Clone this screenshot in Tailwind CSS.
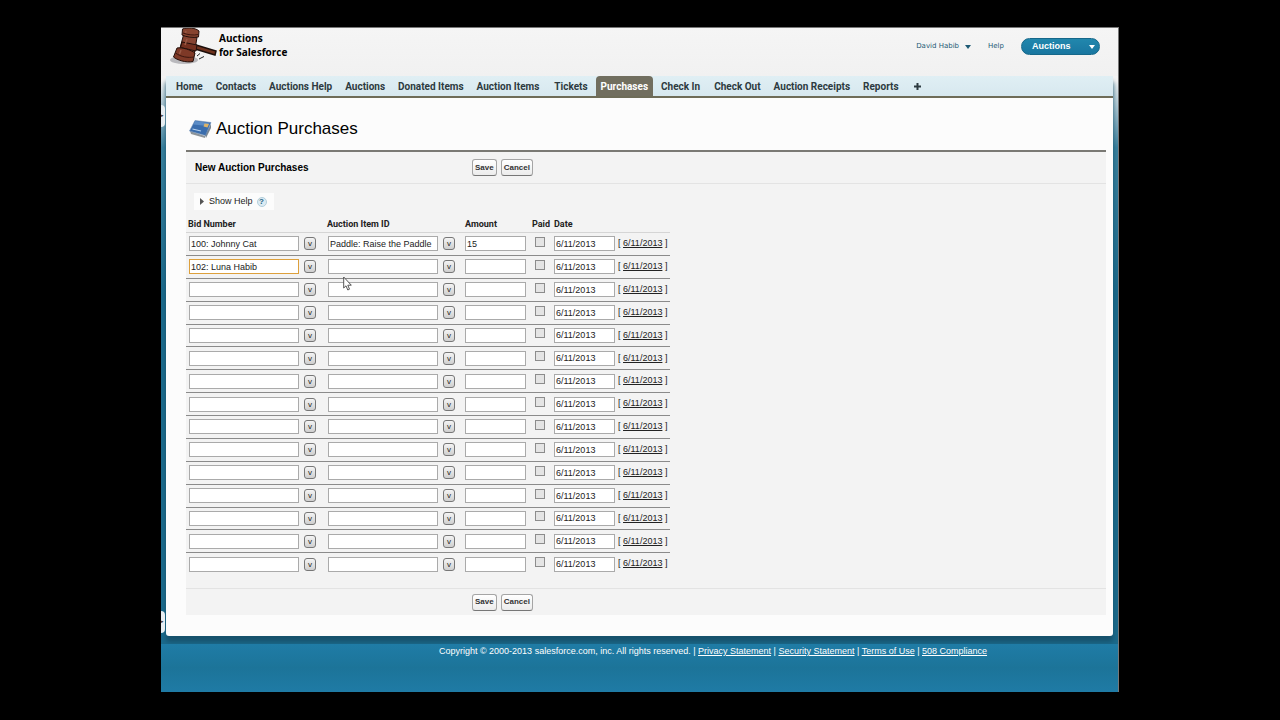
<!DOCTYPE html>
<html lang="en">
<head>
<meta charset="utf-8">
<meta name="viewport" content="width=device-width, initial-scale=1">
<title>Auction Purchases</title>
<script src="https://cdn.jsdelivr.net/npm/@tailwindcss/browser@4"></script>
</head>
<body class="min-h-screen bg-black px-[161px] pt-[27px] pb-[27px] font-['Liberation_Sans',Arial,sans-serif] text-[9px] text-[#222]">
<div class="relative border-r border-t border-[#777] bg-linear-to-b from-[#f3f3f3] from-8% via-[#3b829f] via-18% to-[#1b6a8c] to-40%">
  <span class="absolute left-0 top-[77px] flex h-[22px] w-1 items-center overflow-hidden rounded-r-sm bg-[#e8eef2] text-[5px] text-[#333]">▸</span>
  <span class="absolute left-0 top-[583px] flex h-[22px] w-1 items-center overflow-hidden rounded-r-sm bg-[#e8eef2] text-[5px] text-[#333]">▸</span>

  <header class="relative z-10 flex h-12 items-start justify-between bg-linear-to-b from-[#f5f5f5] to-[#f1f1f1] pr-[18px] pl-2">
    <div class="flex items-start">
      <svg class="h-[38px] w-[50px]" viewBox="0 0 50 38" aria-hidden="true">
        <ellipse cx="15" cy="32" rx="14" ry="4" fill="#b9b9bd"/>
        <path d="M27 17L47 23L46 27L26 21Z" fill="#71331f" stroke="#1d0f0b" stroke-width="1.500"/>
        <path d="M14.500 7L28 9.500L25 27L10 24Z" fill="#874432" stroke="#24100b"/>
        <path d="M13 14L28 17L27 23L11.500 19.500Z" fill="#74301f" stroke="#24100b"/>
        <path d="M13.500 1C19-1 27 0 30 3L29.500 9C24 10 17 9 13 7Z" fill="#87432f" stroke="#24100b"/>
        <path d="M14 5C19 7 25 7.500 29 6.500" stroke="#3b160e" fill="none"/>
        <path d="M8 20C13 19 22 22 26 25L24 33.500C17 35 8 32 4.500 29Z" fill="#7e3927" stroke="#24100b"/>
        <path d="M6.500 25C12 29 19 30 25 29" stroke="#3b160e" fill="none"/>
        <path d="M18 11L16 17M17 3L16.500 5M12 22L10.500 26" stroke="#9a5a45" stroke-width="1.500"/>
        <path d="M28 28L31 25.500M30 31L35 28.500" stroke="#222" fill="none"/>
      </svg>
      <p class="mt-[3px] font-['Open_Sans',sans-serif] text-[10px] leading-[14px] font-bold text-black">Auctions<br>for Salesforce</p>
    </div>
    <div class="mt-2.5 flex items-center text-[#1d5a74]">
      <button type="button" class="mr-[17px] flex items-center gap-1.5 font-['DejaVu_Sans',sans-serif] text-[7px]">David Habib
        <svg class="h-1 w-1.5" viewBox="0 0 6 4" fill="currentColor"><path d="M0 0H6L3 4Z"/></svg></button>
      <a href="#" class="mr-[17px] font-['DejaVu_Sans',sans-serif] text-[7px]">Help</a>
      <button type="button" class="flex h-[17px] w-[79px] items-center justify-between rounded-full border border-[#16688a] bg-linear-to-b from-[#2187ad] to-[#1976a0] pr-1 pl-2.5 text-[9px] font-bold text-white">Auctions
        <svg class="h-1 w-1.5" viewBox="0 0 6 4" fill="currentColor"><path d="M0 0H6L3 4Z"/></svg></button>
    </div>
  </header>

  <div class="mr-[5px] ml-[5px] rounded-b-[3px] bg-[#fcfcfc] shadow-[0_6px_5px_0_#17526c]">
    <nav class="flex h-[22px] items-stretch border-b-2 border-[#6e6c58] bg-linear-to-b from-[#e0eff4] to-[#d7e8ef] pl-1 font-['Roboto',sans-serif] text-[10px] font-bold text-[#2d3a40]">
      <a href="#" class="flex items-center pr-[7px] pl-1.5">Home</a>
      <a href="#" class="flex items-center pr-[7px] pl-1.5">Contacts</a>
      <a href="#" class="flex items-center pr-[7px] pl-1.5">Auctions Help</a>
      <a href="#" class="flex items-center pr-[7px] pl-1.5">Auctions</a>
      <a href="#" class="flex items-center pr-[7px] pl-1.5">Donated Items</a>
      <a href="#" class="flex items-center pr-[7px] pl-1.5">Auction Items</a>
      <a href="#" class="flex items-center px-2">Tickets</a>
      <a href="#" class="flex items-center rounded-t-[4px] bg-[#716e5f] px-[5px] text-white">Purchases</a>
      <a href="#" class="flex items-center px-2">Check In</a>
      <a href="#" class="flex items-center pr-[7px] pl-1.5">Check Out</a>
      <a href="#" class="flex items-center pr-[7px] pl-1.5">Auction Receipts</a>
      <a href="#" class="flex items-center pr-[7px] pl-1.5">Reports</a>
      <a href="#" class="flex items-center px-2" aria-label="All tabs"><svg class="size-[7px]" viewBox="0 0 7 7" fill="currentColor"><path d="M2.500 0H4.500V2.500H7V4.500H4.500V7H2.500V4.500H0V2.500H2.500Z"/></svg></a>
    </nav>
    <main class="pr-[7px] pb-[21px] pl-5">
      <h1 class="flex h-[52px] items-center gap-1 pt-2.5 pl-[3px] text-[17px] text-black">
        <svg class="h-[18px] w-[23px]" viewBox="0 0 23 18" aria-hidden="true">
          <path d="M1 11L16 16V18L2 14Z" fill="#8d9499"/><path d="M16 15L22 4V8L17 18Z" fill="#7a8590"/>
          <path d="M6 0.500L22 2.500L16.500 15.500L0.500 11Z" fill="#3a6dad" stroke="#6f8fb5" stroke-width=".6"/>
          <path d="M6 1L20 3L18.500 6L4.500 4.500Z" fill="#5b8cc6"/>
          <path d="M15.500 3.500L20 4L18.500 7.500L14.500 6.500Z" fill="#dcb368"/>
          <path d="M3.500 9L12 11" stroke="#b9d3ee" stroke-width="1.200"/>
        </svg>Auction Purchases</h1>
      <form class="border-t-2 border-[#7a7974] bg-[#f3f3f3]">
        <div class="flex h-8 items-center gap-1 border-b border-[#e3e3e3] pl-[9px]">
          <h2 class="w-[273px] text-[10px] font-bold text-black">New Auction Purchases</h2>
          <button type="button" class="h-[17px] rounded-[3px] border border-[#a5a5a5] border-b-[#777] bg-linear-to-b from-white to-[#ececec] px-[2px] text-[8px] font-bold text-[#333]">Save</button>
          <button type="button" class="h-[17px] rounded-[3px] border border-[#a5a5a5] border-b-[#777] bg-linear-to-b from-white to-[#ececec] px-[2px] text-[8px] font-bold text-[#333]">Cancel</button>
        </div>
        <div class="pt-[9px]">
          <button type="button" class="ml-2 flex h-[17px] w-20 items-center bg-[#fcfcfc] pl-1.5 text-[#222]">
            <svg class="mr-[5px] h-[7px] w-1" viewBox="0 0 4 7" fill="#555"><path d="M0 0L4 3.500L0 7Z"/></svg>Show Help
            <span class="ml-1 flex size-[10px] items-center justify-center rounded-full border border-[#b4cfdc] bg-[#dcebf3] text-[8px] font-bold text-[#25637f]">?</span></button>
        </div>
        <table class="mt-[7px] h-[358px] w-[484px] table-fixed border-collapse">
          <colgroup><col class="w-[118px]"><col class="w-5"><col class="w-[119px]"><col class="w-5"><col class="w-[67px]"><col class="w-[22px]"><col class="w-[64px]"><col></colgroup>
          <thead>
            <tr class="h-[15px] border-b border-[#d5d5d5] text-left font-['Roboto',sans-serif] leading-[15px] text-[#222]">
              <th class="pl-[2px]" colspan="2">Bid Number</th><th class="pl-[3px]" colspan="2">Auction Item ID</th><th class="pl-[2px]">Amount</th><th class="pl-[2px]">Paid</th><th class="pl-[2px]" colspan="2">Date</th>
            </tr>
          </thead>
          <tbody id="rows"></tbody>
        </table>
        <div class="mt-[13px] flex h-[27px] items-center gap-1 border-t border-[#e3e3e3] pl-[286px]">
          <button type="button" class="h-[17px] rounded-[3px] border border-[#a5a5a5] border-b-[#777] bg-linear-to-b from-white to-[#ececec] px-[2px] text-[8px] font-bold text-[#333]">Save</button>
          <button type="button" class="h-[17px] rounded-[3px] border border-[#a5a5a5] border-b-[#777] bg-linear-to-b from-white to-[#ececec] px-[2px] text-[8px] font-bold text-[#333]">Cancel</button>
        </div>
      </form>
    </main>
  </div>
  <footer class="mt-2 flex h-12 justify-center bg-linear-to-b from-[#1f7ca6] via-[#1c7499] to-[#1f7ba5] pt-px pl-[147px] text-white">
    <p class="whitespace-nowrap">Copyright © 2000-2013 salesforce.com, inc. All rights reserved. | <a href="#" class="underline">Privacy Statement</a> | <a href="#" class="underline">Security Statement</a> | <a href="#" class="underline">Terms of Use</a> | <a href="#" class="underline">508 Compliance</a></p>
  </footer>
</div>
<svg class="pointer-events-none absolute top-[276px] left-[343px] h-[15px] w-[9px]" viewBox="0 0 9 15" aria-hidden="true"><path d="M.7 1V12L3 9.800L4.800 14L6.500 13.200L4.800 9.200H8.300Z" fill="#fff" stroke="#444" stroke-width=".9"/></svg>

<template id="row">
  <tr class="border-b border-[#8b8b8b] last:border-b-0">
    <td class="pl-[3px]"><input type="text" aria-label="Bid number" class="bid block h-[15px] w-[110px] border border-[#aaa] bg-white px-[1px] outline-none focus:border-[#dda03c]"></td>
    <td><button type="button" aria-label="Look up bid number" class="block h-[13px] w-3 rounded-[3px] border border-[#777] bg-linear-to-b from-[#f4f4f4] to-[#cfcfcf] text-[8px] leading-[11px] text-[#222]">v</button></td>
    <td class="pl-[4px]"><input type="text" aria-label="Auction item ID" class="item block h-[15px] w-[110px] border border-[#aaa] bg-white px-[1px]"></td>
    <td><button type="button" aria-label="Look up auction item" class="block h-[13px] w-3 rounded-[3px] border border-[#777] bg-linear-to-b from-[#f4f4f4] to-[#cfcfcf] text-[8px] leading-[11px] text-[#222]">v</button></td>
    <td class="pl-[2px]"><input type="text" aria-label="Amount" class="amount block h-[15px] w-[61px] border border-[#aaa] bg-white px-[1px]"></td>
    <td class="pb-1 pl-[5px]"><input type="checkbox" aria-label="Paid" class="block size-[10px] appearance-none border border-[#8c8c8c] bg-[#e4e4e4]"></td>
    <td class="pl-[2px]"><input type="text" aria-label="Date" value="6/11/2013" class="block h-[15px] w-[61px] border border-[#aaa] bg-white px-[1px]"></td>
    <td class="pl-[2px] whitespace-nowrap">[ <a href="#" class="underline">6/11/2013</a> ]</td>
  </tr>
</template>
<script>
  const entries = [['100: Johnny Cat', 'Paddle: Raise the Paddle', '15'], ['102: Luna Habib', '', '']];
  const body = document.getElementById('rows');
  for (let i = 0; i < 15; i++) {
    const row = document.getElementById('row').content.cloneNode(true);
    const [bid, item, amount] = entries[i] || ['', '', ''];
    row.querySelector('.bid').value = bid;
    row.querySelector('.item').value = item;
    row.querySelector('.amount').value = amount;
    body.append(row);
  }
  const active = body.querySelectorAll('.bid')[1];
  active.focus();
  active.setSelectionRange(active.value.length, active.value.length);
</script>
</body>
</html>
